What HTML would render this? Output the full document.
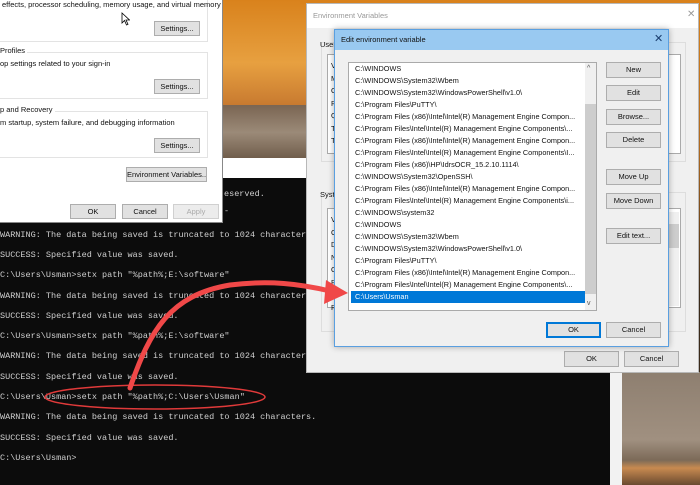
<!DOCTYPE html>
<html><head><meta charset="utf-8"><style>
*{margin:0;padding:0;box-sizing:border-box}
body{width:700px;height:485px;overflow:hidden;position:relative;background:#0c0c0c;font-family:"Liberation Sans",sans-serif;font-size:7.5px;color:#111}
.abs{position:absolute}
.btn{position:absolute;background:#e1e1e1;border:1px solid #adadad;text-align:center;font-size:7.5px;line-height:13px;color:#111;white-space:nowrap;overflow:hidden}
.con{position:absolute;font-family:"Liberation Mono",monospace;font-size:8.5px;color:#cfcfcf;white-space:pre;line-height:10px}
.row{position:absolute;left:6px;font-size:7.3px;line-height:12px;white-space:nowrap;color:#111}
</style></head><body>
<div class="abs" style="left:223px;top:0;width:90px;height:105px;background:linear-gradient(#d9821c,#e7a040 60%,#c87a30)"></div>
<div class="abs" style="left:223px;top:105px;width:90px;height:55px;background:linear-gradient(#7a6552,#9b8a78 50%,#6d5a48)"></div>
<div class="abs" style="left:223px;top:158px;width:90px;height:20px;background:#fff"></div>
<div class="abs" style="left:300px;top:0;width:400px;height:4px;background:#d9821c"></div>
<div class="abs" style="left:622px;top:372px;width:78px;height:113px;background:linear-gradient(#8e7f70,#a09080 60%,#7c6a58 78%,#c88a50 85%,#6a4a30)"></div>
<div class="abs" style="left:610px;top:372px;width:12px;height:113px;background:#f2f2f2"></div>
<div class="abs" style="left:690px;top:0;width:10px;height:372px;background:linear-gradient(#d9821c,#b06a20 40%,#3a2a1a 80%)"></div>

<div class="con" style="left:224px;top:189px">eserved.</div>
<div class="con" style="left:224px;top:206px">-</div>
<div class="con" style="left:0;top:230px">WARNING: The data being saved is truncated to 1024 character</div>
<div class="con" style="left:0;top:250px">SUCCESS: Specified value was saved.</div>
<div class="con" style="left:0;top:270px">C:\Users\Usman>setx path "%path%;E:\software"</div>
<div class="con" style="left:0;top:291px">WARNING: The data being saved is truncated to 1024 character</div>
<div class="con" style="left:0;top:311px">SUCCESS: Specified value was saved.</div>
<div class="con" style="left:0;top:331px">C:\Users\Usman>setx path "%path%;E:\software"</div>
<div class="con" style="left:0;top:351px">WARNING: The data being saved is truncated to 1024 character</div>
<div class="con" style="left:0;top:372px">SUCCESS: Specified value was saved.</div>
<div class="con" style="left:0;top:392px">C:\Users\Usman>setx path "%path%;C:\Users\Usman"</div>
<div class="con" style="left:0;top:412px">WARNING: The data being saved is truncated to 1024 characters.</div>
<div class="con" style="left:0;top:433px">SUCCESS: Specified value was saved.</div>
<div class="con" style="left:0;top:453px">C:\Users\Usman></div>

<div class="abs" style="left:0;top:0;width:223px;height:223px;background:#fff;border-right:1px solid #888;border-bottom:1px solid #888">
 <div class="abs" style="left:0;top:-6px;width:208px;height:48px;border:1px solid #e3e3e3;border-left:none"></div>
 <div class="abs" style="left:2px;top:0px">effects, processor scheduling, memory usage, and virtual memory</div>
 <div class="btn" style="left:154px;top:21px;width:46px;height:15px">Settings...</div>
 <div class="abs" style="left:0;top:52px;width:208px;height:47px;border:1px solid #e3e3e3;border-left:none"></div>
 <div class="abs" style="left:0;top:46px;background:#fff;padding-right:2px">Profiles</div>
 <div class="abs" style="left:0;top:59px">op settings related to your sign-in</div>
 <div class="btn" style="left:154px;top:79px;width:46px;height:15px">Settings...</div>
 <div class="abs" style="left:0;top:111px;width:208px;height:47px;border:1px solid #e3e3e3;border-left:none"></div>
 <div class="abs" style="left:0;top:105px;background:#fff;padding-right:2px">p and Recovery</div>
 <div class="abs" style="left:0;top:118px">m startup, system failure, and debugging information</div>
 <div class="btn" style="left:154px;top:138px;width:46px;height:15px">Settings...</div>
 <div class="btn" style="left:126px;top:167px;width:81px;height:15px">Environment Variables...</div>
 <div class="btn" style="left:70px;top:204px;width:46px;height:15px">OK</div>
 <div class="btn" style="left:122px;top:204px;width:46px;height:15px">Cancel</div>
 <div class="btn" style="left:173px;top:204px;width:46px;height:15px;color:#aaa;background:#ececec;border-color:#d0d0d0">Apply</div>
 <svg class="abs" style="left:121px;top:12px" width="9" height="14"><path d="M1 1 L1 11 L3.5 8.5 L5.5 13 L7 12.3 L5 8 L8.5 8 Z" fill="#fff" stroke="#000" stroke-width="0.8"/></svg>
</div>

<div class="abs" style="left:306px;top:3px;width:393px;height:370px;background:#f0f0f0;border:1px solid #b8b8b8">
 <div class="abs" style="left:0;top:0;width:391px;height:24px;background:#fff"></div>
 <div class="abs" style="left:6px;top:7px;color:#999">Environment Variables</div>
 <div class="abs" style="left:380px;top:5px;color:#999;font-size:10px">✕</div>
 <div class="abs" style="left:14px;top:38px;width:365px;height:120px;border:1px solid #ddd"></div>
 <div class="abs" style="left:13px;top:36px">User</div>
 <div class="abs" style="left:20px;top:50px;width:354px;height:100px;background:#fff;border:1px solid #aaa"></div>
 <div class="abs" style="left:14px;top:188px;width:365px;height:140px;border:1px solid #ddd"></div>
 <div class="abs" style="left:13px;top:186px">Syst</div>
 <div class="abs" style="left:20px;top:204px;width:354px;height:100px;background:#fff;border:1px solid #aaa"></div>
 <div class="abs" style="left:362px;top:208px;width:10px;height:94px;background:#f0f0f0"><div style="margin-top:12px;height:24px;background:#cdcdcd"></div></div>
 <div class="abs" style="left:294px;top:160px;width:54px;height:15px;background:#e1e1e1;border:1px solid #adadad"></div>
 <div class="abs" style="left:294px;top:314px;width:54px;height:15px;background:#e1e1e1;border:1px solid #adadad"></div>
 <div class="btn" style="left:257px;top:347px;width:55px;height:16px">OK</div>
 <div class="btn" style="left:317px;top:347px;width:55px;height:16px">Cancel</div>
 <div class="abs" style="left:24px;top:56px;line-height:12.5px">Va<br>M<br>O<br>Pa<br>Q<br>TE<br>TI</div>
 <div class="abs" style="left:24px;top:210px;line-height:12.5px">Va<br>Co<br>Dr<br>NI<br>OS<br>Pa<br>PS<br>PF</div>
</div>

<div class="abs" style="left:334px;top:29px;width:335px;height:318px;background:#f0f0f0;border:1px solid #5a9fe0;box-shadow:0 0 6px rgba(0,0,0,.3)">
 <div class="abs" style="left:0;top:0;width:333px;height:20px;background:#99c9f1"></div>
 <div class="abs" style="left:6px;top:5px;color:#111">Edit environment variable</div>
 <div class="abs" style="left:319px;top:2px;color:#1a3d6e;font-size:11px">✕</div>
 <div class="abs" style="left:13px;top:32px;width:249px;height:249px;background:#fff;border:1px solid #aaa;overflow:hidden">
  <div class="abs" style="left:236px;top:0;width:11px;height:247px;background:#f0f0f0"><div style="margin-top:41px;height:190px;background:#cdcdcd"></div></div>
  <div class="abs" style="left:238px;top:2px;font-size:7px;color:#555">^</div>
  <div class="abs" style="left:238px;top:237px;font-size:7px;color:#555">v</div>
  <div class="abs" style="left:2px;top:228px;width:234px;height:12px;background:#0078d7"></div>
  <div class="row" style="top:0px">C:\WINDOWS</div>
  <div class="row" style="top:12px">C:\WINDOWS\System32\Wbem</div>
  <div class="row" style="top:24px">C:\WINDOWS\System32\WindowsPowerShell\v1.0\</div>
  <div class="row" style="top:36px">C:\Program Files\PuTTY\</div>
  <div class="row" style="top:48px">C:\Program Files (x86)\Intel\Intel(R) Management Engine Compon...</div>
  <div class="row" style="top:60px">C:\Program Files\Intel\Intel(R) Management Engine Components\...</div>
  <div class="row" style="top:72px">C:\Program Files (x86)\Intel\Intel(R) Management Engine Compon...</div>
  <div class="row" style="top:84px">C:\Program Files\Intel\Intel(R) Management Engine Components\I...</div>
  <div class="row" style="top:96px">C:\Program Files (x86)\HP\IdrsOCR_15.2.10.1114\</div>
  <div class="row" style="top:108px">C:\WINDOWS\System32\OpenSSH\</div>
  <div class="row" style="top:120px">C:\Program Files (x86)\Intel\Intel(R) Management Engine Compon...</div>
  <div class="row" style="top:132px">C:\Program Files\Intel\Intel(R) Management Engine Components\i...</div>
  <div class="row" style="top:144px">C:\WINDOWS\system32</div>
  <div class="row" style="top:156px">C:\WINDOWS</div>
  <div class="row" style="top:168px">C:\WINDOWS\System32\Wbem</div>
  <div class="row" style="top:180px">C:\WINDOWS\System32\WindowsPowerShell\v1.0\</div>
  <div class="row" style="top:192px">C:\Program Files\PuTTY\</div>
  <div class="row" style="top:204px">C:\Program Files (x86)\Intel\Intel(R) Management Engine Compon...</div>
  <div class="row" style="top:216px">C:\Program Files\Intel\Intel(R) Management Engine Components\...</div>
  <div class="row" style="top:228px;color:#fff">C:\Users\Usman</div>
 </div>
 <div class="btn" style="left:271px;top:32px;width:55px;height:16px">New</div>
 <div class="btn" style="left:271px;top:55px;width:55px;height:16px">Edit</div>
 <div class="btn" style="left:271px;top:79px;width:55px;height:16px">Browse...</div>
 <div class="btn" style="left:271px;top:102px;width:55px;height:16px">Delete</div>
 <div class="btn" style="left:271px;top:139px;width:55px;height:16px">Move Up</div>
 <div class="btn" style="left:271px;top:163px;width:55px;height:16px">Move Down</div>
 <div class="btn" style="left:271px;top:198px;width:55px;height:16px">Edit text...</div>
 <div class="btn" style="left:211px;top:292px;width:55px;height:16px;border:2px solid #0078d7;line-height:12px">OK</div>
 <div class="btn" style="left:271px;top:292px;width:55px;height:16px">Cancel</div>
</div>

<svg class="abs" style="left:0;top:0" width="700" height="485">
 <ellipse cx="155" cy="397" rx="110" ry="12" fill="none" stroke="#e03a3a" stroke-width="1.5"/>
 <path d="M130 388 C150 330 170 295 230 285 C270 280 300 284 330 291" fill="none" stroke="#f04848" stroke-width="5" stroke-linecap="round"/>
 <path d="M326 280 L348 293 L324 304 Z" fill="#f04848"/>
</svg>
</body></html>
